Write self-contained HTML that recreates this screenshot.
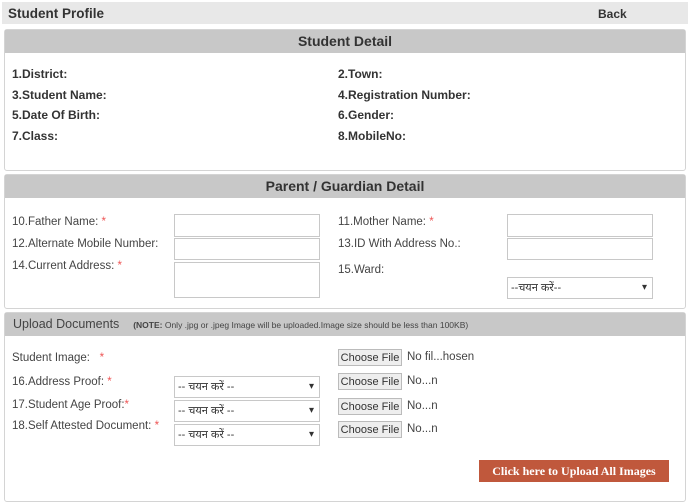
<!DOCTYPE html><html><head><style>
body{margin:0;width:688px;height:504px;background:#fff;font-family:"Liberation Sans","DejaVu Sans",sans-serif;position:relative;overflow:hidden;color:#333}
.a{position:absolute;white-space:nowrap}
.b{font-weight:bold;font-size:12px;color:#333}
.n{font-size:11.5px;color:#444}
.p{position:absolute;left:4px;width:680px;border:1px solid #d4d4d4;border-radius:3px;background:#fff}
.h{height:23px;background:#c8c8c8;text-align:center;font-weight:bold;font-size:14px;line-height:23px;color:#333}
.i{position:absolute;border:1px solid #c8c8c8;background:#fff}
.s{position:absolute;border:1px solid #c8c8c8;background:#fff;font-size:11px;line-height:20px;padding-left:3px;box-sizing:border-box}
.s:after{content:"▾";position:absolute;right:5px;top:0;font-size:10px}
.f{position:absolute;left:338px;width:64px;height:17px;background:#eee;border:1px solid #bbb;font-size:11px;text-align:center;line-height:17px;box-sizing:border-box}
.r{color:#e55}
</style></head><body>
<div class="a" style="left:2px;top:2px;width:686px;height:22px;background:#e8e8e8"></div>
<div class="a b" style="left:8px;top:6px;font-size:13.5px">Student Profile</div>
<div class="a b" style="left:598px;top:7px">Back</div>

<div class="p" style="top:29px;height:140px"><div class="h">Student Detail</div></div>
<div class="a b" style="left:12px;top:67px">1.District:</div><div class="a b" style="left:338px;top:67px">2.Town:</div>
<div class="a b" style="left:12px;top:88px">3.Student Name:</div><div class="a b" style="left:338px;top:88px">4.Registration Number:</div>
<div class="a b" style="left:12px;top:108px">5.Date Of Birth:</div><div class="a b" style="left:338px;top:108px">6.Gender:</div>
<div class="a b" style="left:12px;top:129px">7.Class:</div><div class="a b" style="left:338px;top:129px">8.MobileNo:</div>

<div class="p" style="top:174px;height:133px"><div class="h">Parent / Guardian Detail</div></div>
<div class="a n" style="left:12px;top:216px">10.Father Name: <span class="r">*</span></div>
<div class="i" style="left:174px;top:214px;width:144px;height:21px"></div>
<div class="a n" style="left:12px;top:238px">12.Alternate Mobile Number:</div>
<div class="i" style="left:174px;top:238px;width:144px;height:20px"></div>
<div class="a n" style="left:12px;top:260px">14.Current Address: <span class="r">*</span></div>
<div class="i" style="left:174px;top:262px;width:144px;height:34px"></div>
<div class="a n" style="left:338px;top:216px">11.Mother Name: <span class="r">*</span></div>
<div class="i" style="left:507px;top:214px;width:144px;height:21px"></div>
<div class="a n" style="left:338px;top:238px">13.ID With Address No.:</div>
<div class="i" style="left:507px;top:238px;width:144px;height:20px"></div>
<div class="a n" style="left:338px;top:264px">15.Ward:</div>
<div class="s" style="left:507px;top:277px;width:146px;height:22px">--चयन करें--</div>

<div class="p" style="top:312px;height:188px"><div class="h" style="text-align:left;padding-left:8px;font-weight:normal;font-size:12.5px;color:#444">Upload Documents &nbsp;&nbsp; <span style="font-size:8.5px"><b>(NOTE:</b> Only .jpg or .jpeg Image will be uploaded.Image size should be less than 100KB)</span></div></div>
<div class="a n" style="left:12px;top:352px">Student Image: &nbsp;&nbsp;<span class="r">*</span></div>
<div class="f" style="top:349px">Choose File</div><div class="a n" style="left:407px;top:351px">No fil...hosen</div>
<div class="a n" style="left:12px;top:376px">16.Address Proof: <span class="r">*</span></div>
<div class="s" style="left:174px;top:376px;width:146px;height:22px">-- चयन करें --</div>
<div class="f" style="top:373px">Choose File</div><div class="a n" style="left:407px;top:375px">No...n</div>
<div class="a n" style="left:12px;top:399px">17.Student Age Proof:<span class="r">*</span></div>
<div class="s" style="left:174px;top:400px;width:146px;height:22px">-- चयन करें --</div>
<div class="f" style="top:398px">Choose File</div><div class="a n" style="left:407px;top:400px">No...n</div>
<div class="a n" style="left:12px;top:420px">18.Self Attested Document: <span class="r">*</span></div>
<div class="s" style="left:174px;top:424px;width:146px;height:22px">-- चयन करें --</div>
<div class="f" style="top:421px">Choose File</div><div class="a n" style="left:407px;top:423px">No...n</div>
<div class="a" style="left:479px;top:460px;width:190px;height:22px;background:#c0583c;color:#fff;font-family:'Liberation Serif',serif;font-weight:bold;font-size:12px;text-align:center;line-height:22px">Click here to Upload All Images</div>
</body></html>
